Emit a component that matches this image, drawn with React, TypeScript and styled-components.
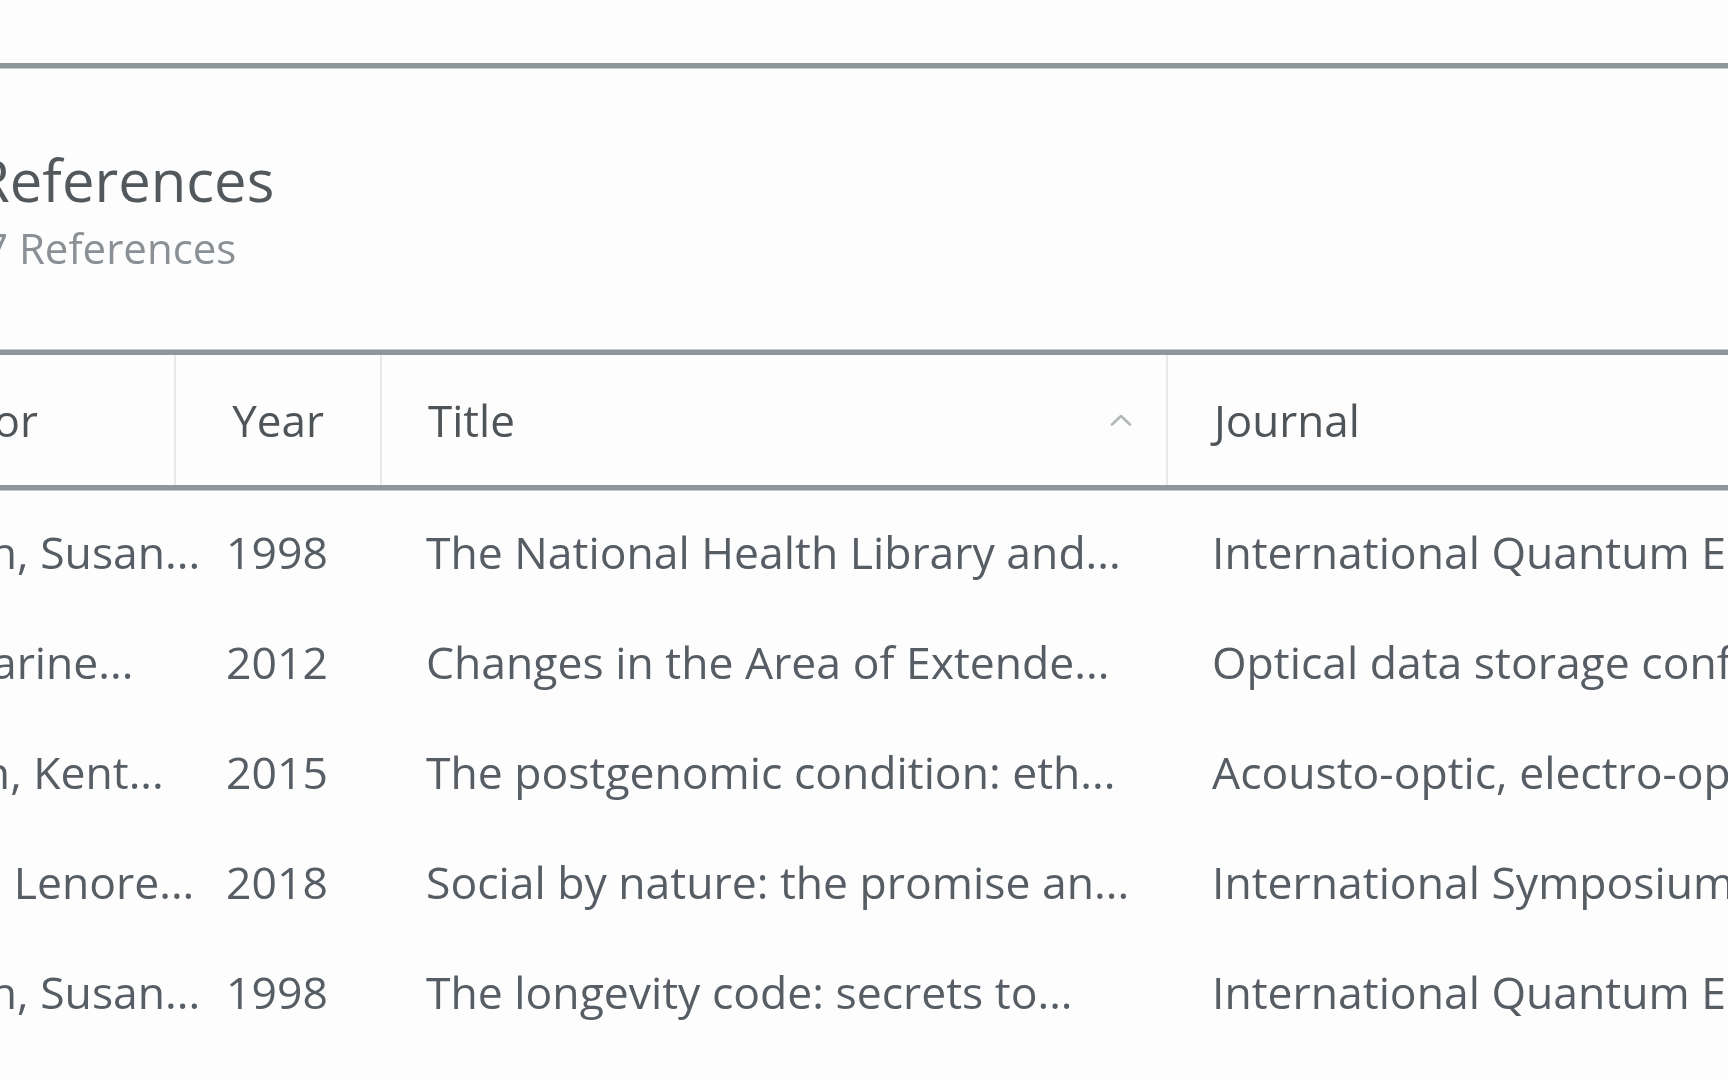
import React from "react"
import styled, { createGlobalStyle } from "styled-components"

const GlobalStyle = createGlobalStyle`
  html, body {
    margin: 0;
    padding: 0;
    overflow: hidden;
    background: #fcfdfc;
  }
`

const Page = styled.div`
  height: 100vh;
  overflow: hidden;
  background: #fcfdfc;
  font-family: "Open Sans", "Noto Sans", sans-serif;
  filter: blur(0.7px);
`

const Toolbar = styled.div`
  height: 63px;
  border-bottom: 5px solid #8c969b;
  box-shadow: 0 1px 0 #c7cdd0, 0 -1px 0 #dde1e3;
`

// the view is scrolled a little to the right, so the left side is cut off
const Content = styled.div`
  margin-left: -150px;
`

const Heading = styled.div`
  padding: 77px 0 0 124px;
`

const Title = styled.h1`
  margin: 0;
  font-size: 58px;
  font-weight: 400;
  line-height: 1.2;
  color: #53585c;
`

const Subtitle = styled.div`
  margin: 8px 0 0 10px;
  font-size: 42px;
  line-height: 1.2;
  color: #8a9095;
`

const columns = "324px 206px 786px 1000px"

const Table = styled.div`
  margin-top: 77px;
`

const HeaderRow = styled.div`
  display: grid;
  grid-template-columns: ${columns};
  height: 130px;
  border-top: 5px solid #8c969b;
  border-bottom: 5px solid #8c969b;
  box-shadow: 0 -1px 0 #c7cdd0, 0 1px 0 #c7cdd0;
`

const HeaderCell = styled.div<{ $center?: boolean; $first?: boolean }>`
  display: flex;
  align-items: center;
  justify-content: ${p => (p.$center ? "center" : "space-between")};
  padding: 0 46px;
  font-size: 44px;
  color: #4f5458;
  border-left: ${p => (p.$first ? "none" : "2px solid #e6e9eb")};
  white-space: nowrap;
`

const SortIcon = styled.svg`
  width: 22px;
  height: 12px;
  margin-right: -12px;
`

const Body = styled.div`
  padding-top: 7px;
`

const Row = styled.div`
  display: grid;
  grid-template-columns: ${columns};
  height: 110px;
  align-items: center;
`

const Cell = styled.div<{ $center?: boolean }>`
  padding: 0 46px;
  font-size: 44.5px;
  color: #575d65;
  white-space: nowrap;
  text-align: ${p => (p.$center ? "center" : "left")};
`

const references = [
  {
    author: "Olson, Susan...",
    year: "1998",
    title: "The National Health Library and...",
    journal: "International Quantum Electronics Conference",
  },
  {
    author: "Catharine...",
    year: "2012",
    title: "Changes in the Area of Extende...",
    journal: "Optical data storage conference",
  },
  {
    author: "Dunn, Kent...",
    year: "2015",
    title: "The postgenomic condition: eth...",
    journal: "Acousto-optic, electro-optic, and magneto-optic devices",
  },
  {
    author: "Tran, Lenore...",
    year: "2018",
    title: "Social by nature: the promise an...",
    journal: "International Symposium on Optical Memory",
  },
  {
    author: "Olson, Susan...",
    year: "1998",
    title: "The longevity code: secrets to...",
    journal: "International Quantum Electronics Conference",
  },
  {
    author: "Powell, Gab...",
    year: "2010",
    title: "Teaching and learning in the...",
    journal: "Optical fiber communication conference",
  },
]

export default function App() {
  return (
    <Page>
      <GlobalStyle />
      <Toolbar />
      <Content>
        <Heading>
          <Title>References</Title>
          <Subtitle>7 References</Subtitle>
        </Heading>
        <Table>
          <HeaderRow>
            <HeaderCell $first>Author</HeaderCell>
            <HeaderCell $center>Year</HeaderCell>
            <HeaderCell>
              Title
              <SortIcon viewBox="0 0 22 12">
                <polyline
                  points="2,10.5 11,2 20,10.5"
                  fill="none"
                  stroke="#b3b8bb"
                  strokeWidth="2.6"
                  strokeLinecap="round"
                  strokeLinejoin="round"
                />
              </SortIcon>
            </HeaderCell>
            <HeaderCell>Journal</HeaderCell>
          </HeaderRow>
          <Body>
            {references.map((ref, i) => (
              <Row key={i}>
                <Cell>{ref.author}</Cell>
                <Cell $center>{ref.year}</Cell>
                <Cell>{ref.title}</Cell>
                <Cell>{ref.journal}</Cell>
              </Row>
            ))}
          </Body>
        </Table>
      </Content>
    </Page>
  )
}
